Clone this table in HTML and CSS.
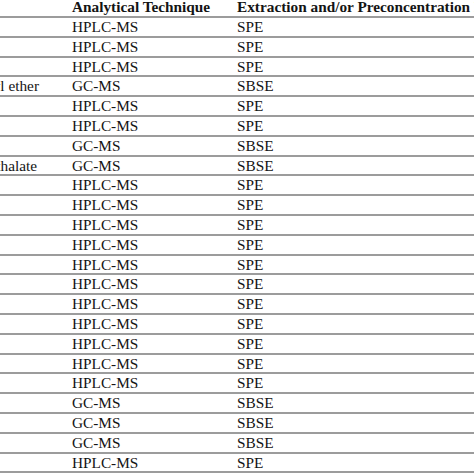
FILE: index.html
```html
<!DOCTYPE html>
<html lang="en">
<head>
<meta charset="utf-8">
<title>Table</title>
<link rel="stylesheet" href="styles.css">
</head>
<body>
<div class="table">
  <div class="row head">
    <div class="c1"></div>
    <div class="c2">Analytical Technique</div>
    <div class="c3">Extraction and/or Preconcentration Method</div>
  </div>
  <div class="row"><div class="c1"></div><div class="c2">HPLC-MS</div><div class="c3">SPE</div></div>
  <div class="row"><div class="c1"></div><div class="c2">HPLC-MS</div><div class="c3">SPE</div></div>
  <div class="row"><div class="c1"></div><div class="c2">HPLC-MS</div><div class="c3">SPE</div></div>
  <div class="row"><div class="c1 end-a"><span>Polybrominated diphenyl ether</span></div><div class="c2">GC-MS</div><div class="c3">SBSE</div></div>
  <div class="row"><div class="c1"></div><div class="c2">HPLC-MS</div><div class="c3">SPE</div></div>
  <div class="row"><div class="c1"></div><div class="c2">HPLC-MS</div><div class="c3">SPE</div></div>
  <div class="row"><div class="c1"></div><div class="c2">GC-MS</div><div class="c3">SBSE</div></div>
  <div class="row"><div class="c1 end-b"><span>Di(2-ethylhexyl) phthalate</span></div><div class="c2">GC-MS</div><div class="c3">SBSE</div></div>
  <div class="row"><div class="c1"></div><div class="c2">HPLC-MS</div><div class="c3">SPE</div></div>
  <div class="row"><div class="c1"></div><div class="c2">HPLC-MS</div><div class="c3">SPE</div></div>
  <div class="row"><div class="c1"></div><div class="c2">HPLC-MS</div><div class="c3">SPE</div></div>
  <div class="row"><div class="c1"></div><div class="c2">HPLC-MS</div><div class="c3">SPE</div></div>
  <div class="row"><div class="c1"></div><div class="c2">HPLC-MS</div><div class="c3">SPE</div></div>
  <div class="row"><div class="c1"></div><div class="c2">HPLC-MS</div><div class="c3">SPE</div></div>
  <div class="row"><div class="c1"></div><div class="c2">HPLC-MS</div><div class="c3">SPE</div></div>
  <div class="row"><div class="c1"></div><div class="c2">HPLC-MS</div><div class="c3">SPE</div></div>
  <div class="row"><div class="c1"></div><div class="c2">HPLC-MS</div><div class="c3">SPE</div></div>
  <div class="row"><div class="c1"></div><div class="c2">HPLC-MS</div><div class="c3">SPE</div></div>
  <div class="row"><div class="c1"></div><div class="c2">HPLC-MS</div><div class="c3">SPE</div></div>
  <div class="row"><div class="c1"></div><div class="c2">GC-MS</div><div class="c3">SBSE</div></div>
  <div class="row"><div class="c1"></div><div class="c2">GC-MS</div><div class="c3">SBSE</div></div>
  <div class="row"><div class="c1"></div><div class="c2">GC-MS</div><div class="c3">SBSE</div></div>
  <div class="row"><div class="c1"></div><div class="c2">HPLC-MS</div><div class="c3">SPE</div></div>
</div>
</body>
</html>
```

FILE: styles.css
```css
html, body {
  margin: 0;
  padding: 0;
  background: #ffffff;
  overflow: hidden;
}
body {
  width: 474px;
  height: 474px;
  font-family: "Liberation Serif", "Times New Roman", serif;
  font-size: 15.3px;
  color: #141414;
}
.table {
  display: flex;
  flex-direction: column;
}
.row {
  display: grid;
  grid-template-columns: 72px 165px 1fr;
  height: 19.8px;
  box-sizing: border-box;
  border-bottom: 2px solid #9c9c9c;
  line-height: 17.8px;
  white-space: nowrap;
}
.row.head {
  height: 18px;
  line-height: 13px;
  font-weight: bold;
}
.c1 {
  overflow: hidden;
  display: flex;
  justify-content: flex-end;
}
.c1 span {
  flex: none;
}
.end-a { padding-right: 33px; }
.end-b { padding-right: 35px; }
```
